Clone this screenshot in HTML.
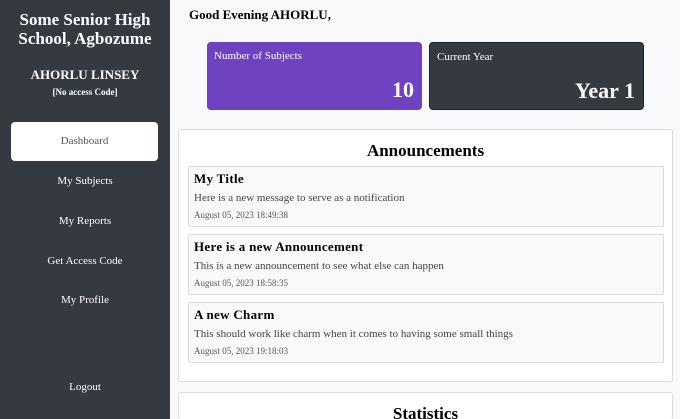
<!DOCTYPE html>
<html style="width:680px;height:419px;overflow:hidden"><head><style>
*{margin:0;padding:0;box-sizing:border-box}
body{width:680px;height:419px;overflow:hidden;background:#f8f9fa;font-family:"Liberation Serif",serif;position:relative}
.sb{position:absolute;left:0;top:0;width:170px;height:419px;background:#343a40;color:#fff;text-align:center}
.sb .t{position:absolute;top:10px;left:0;width:170px;font-weight:bold;font-size:17px;line-height:19px}
.sb .n{position:absolute;top:67px;left:0;width:170px;font-weight:bold;font-size:13px}
.sb .c{position:absolute;top:87px;left:0;width:170px;font-weight:bold;font-size:9px}
.btn{position:absolute;left:11px;top:122px;width:147px;height:39px;background:#fff;border-radius:4px;color:#555;font-size:11px;line-height:39px}
.nv{position:absolute;left:0;width:170px;font-size:11px}
.g{position:absolute;left:189px;top:7px;font-weight:bold;font-size:13px}
.card{position:absolute;top:42px;width:215px;height:68px;border-radius:4px;color:#fff}
.card .l{position:absolute;left:7px;top:8px;font-size:11px}
.card .v{position:absolute;right:8px;top:35px;font-weight:bold;font-size:22px}
.pan{position:absolute;left:178px;width:495px;background:#fff;border:1px solid #ddd;border-radius:2px;overflow:hidden}
.pan h2{text-align:center;font-size:17px;font-weight:bold;margin-top:11px;font-family:"Liberation Serif",serif}
.it{position:absolute;left:9px;width:476px;height:61px;background:#f8f9fa;border:1px solid #ddd;border-radius:2px;padding:4px 5px}
.it b{display:block;font-size:13px;letter-spacing:.3px}
.it p{font-size:11px;color:#444;margin-top:5px}
.it s{display:block;text-decoration:none;font-size:9px;color:#555;margin-top:6px}
</style></head><body>
<div class="sb">
<div class="t">Some Senior High<br>School, Agbozume</div>
<div class="n">AHORLU LINSEY</div>
<div class="c">[No access Code]</div>
<div class="btn">Dashboard</div>
<div class="nv" style="top:175px">My Subjects</div>
<div class="nv" style="top:215px">My Reports</div>
<div class="nv" style="top:255px">Get Access Code</div>
<div class="nv" style="top:294px">My Profile</div>
<div class="nv" style="top:381px">Logout</div>
</div>
<div class="g">Good Evening AHORLU,</div>
<div class="card" style="left:207px;background:#6f42c1"><div class="l">Number of Subjects</div><div class="v">10</div></div>
<div class="card" style="left:429px;background:#343a40;border:1px solid #1d2124"><div class="l">Current Year</div><div class="v">Year 1</div></div>
<div class="pan" style="top:129px;height:253px"><h2>Announcements</h2>
<div class="it" style="top:36px"><b>My Title</b><p>Here is a new message to serve as a notification</p><s>August 05, 2023 18:49:38</s></div>
<div class="it" style="top:104px"><b>Here is a new Announcement</b><p>This is a new announcement to see what else can happen</p><s>August 05, 2023 18:58:35</s></div>
<div class="it" style="top:172px"><b>A new Charm</b><p>This should work like charm when it comes to having some small things</p><s>August 05, 2023 19:18:03</s></div>
</div>
<div class="pan" style="top:392px;height:27px;border-bottom:none"><h2>Statistics</h2></div>
</body></html>
